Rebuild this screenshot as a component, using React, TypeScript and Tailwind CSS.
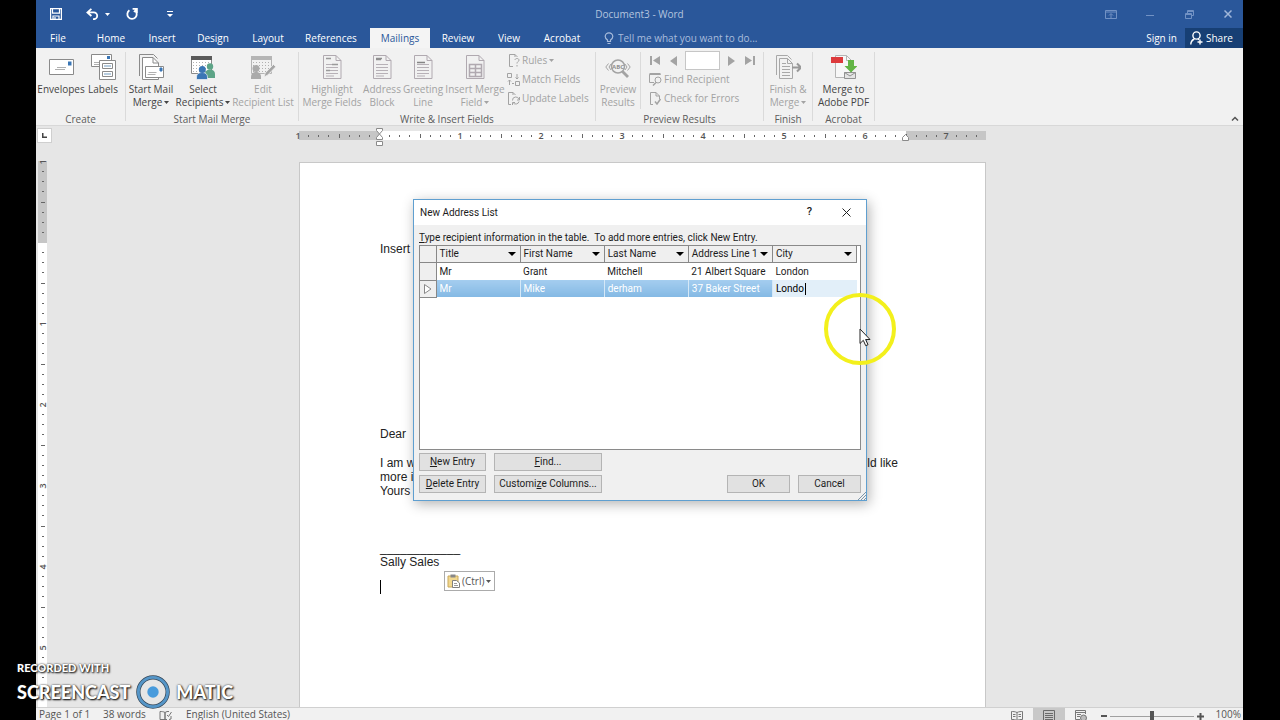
import { type ReactNode, useState } from "react";

const FONT_UI = '"Open Sans", "Noto Sans", sans-serif';
const FONT_DIALOG = 'Roboto, "Open Sans", sans-serif';
const FONT_DOCUMENT = '"Liberation Sans", Arial, sans-serif';

const TABS = [
  { label: "File", width: "w-[44px]" },
  { label: "Home", width: "w-[62px]" },
  { label: "Insert", width: "w-[40px]" },
  { label: "Design", width: "w-[62px]" },
  { label: "Layout", width: "w-[48px]" },
  { label: "References", width: "w-[78px]" },
  { label: "Mailings", width: "w-[60px]" },
  { label: "Review", width: "w-[56px]" },
  { label: "View", width: "w-[46px]" },
  { label: "Acrobat", width: "w-[60px]" },
];

const COLUMNS = ["Title", "First Name", "Last Name", "Address Line 1", "City"];

const INCH = 81;

function Caret({ className = "" }: Readonly<{ className?: string }>) {
  return (
    <svg viewBox="0 0 5 3" className={`inline-block h-[3px] w-[5px] ${className}`} fill="currentColor">
      <path d="M0 0h5L2.5 3z" />
    </svg>
  );
}

function SaveIcon() {
  return (
    <svg viewBox="0 0 12 12" className="size-3" fill="none" stroke="#fff">
      <path d="M.6.6h10.8v10.8H.6zM2.5.6v4.6h7V.6M3 11.4V8h6v3.4M5 9v2" strokeWidth="1.2" />
    </svg>
  );
}

function UndoIcon() {
  return (
    <svg viewBox="0 0 13 12" className="h-3 w-[13px]" fill="none" stroke="#fff" strokeWidth="1.8">
      <path d="M5.4.8 1.4 4.4l4 3.6M1.8 4.4h6a3.4 3.4 0 0 1 0 6.8H7" />
    </svg>
  );
}

function RedoIcon() {
  return (
    <svg viewBox="0 0 12 12" className="size-3" fill="none" stroke="#fff" strokeWidth="1.8">
      <path d="M3.4 2.3A4.7 4.7 0 1 0 8.8 2.4M6.6.9h4.3v4.2M10.6 1.2 8 4" />
    </svg>
  );
}

function EnvelopeIcon() {
  return (
    <svg viewBox="0 0 26 26" className="size-[26px]" fill="none">
      <path d="M1.5 5.5h24v15h-24z" fill="#fff" stroke="#8a8a8a" />
      <path d="M20 7.5h3.5v4H20z" fill="#3a76b5" />
      <path d="M9 13.5h9M7 15.5h10" stroke="#b0b0b0" />
    </svg>
  );
}

function LabelsIcon() {
  return (
    <svg viewBox="0 0 26 26" className="size-[26px]" fill="none">
      <path d="M1.5.5h20v12h-20z" fill="#fff" stroke="#8a8a8a" />
      <path d="M17 2h3v3h-3z" fill="#3a76b5" />
      <path d="M4 8.5h5M4 10.5h5" stroke="#b0b0b0" />
      <path d="M9.5 6.5h16v19h-16z" fill="#fff" stroke="#8a8a8a" />
      <path d="M12.5 9.5h10v5h-10zM12.5 17.5h10v5h-10z" stroke="#8a8a8a" />
      <path d="M14 12h7M14 20h7" stroke="#6f9ac0" />
    </svg>
  );
}

function StartMergeIcon() {
  return (
    <svg viewBox="0 0 26 26" className="size-[26px]" fill="none" stroke="#8a8a8a">
      <path d="M1.5 22V.5h14l4 4" />
      <path d="M4.5 25.5v-22h10.5l5.5 5.5v16.5z" fill="#fff" />
      <path d="M15 3.5v5.5h5.5" />
      <path d="M7.5 12.5h18v11h-18z" fill="#fff" />
      <path d="M22 14h2v3h-2z" fill="#3a76b5" stroke="#3a76b5" />
      <path d="M10.5 18.5h8M9.5 20.5h8" stroke="#b0b0b0" />
    </svg>
  );
}

function RecipientsIcon({ muted = false }: Readonly<{ muted?: boolean }>) {
  const head = muted ? "#b5b5b5" : "#5a5a5a";
  const one = muted ? "#aaa" : "#3a76b5";
  const two = muted ? "#aaa" : "#5da487";
  return (
    <svg viewBox="0 0 26 26" className="size-[26px]" fill="none">
      <path d="M1.5 2.5h20v17h-20z" fill={muted ? "#f1f1f1" : "#fff"} stroke={muted ? "#b5b5b5" : "#8a8a8a"} />
      <path d="M1 2h21v4H1z" fill={head} />
      <path d="M3 8.5h17M3 11.5h17M3 14.5h17M3 17.5h17" stroke="#b0b0b0" strokeDasharray="1 2" />
      {muted ? (
        <>
          <path d="M1 25v-2.5c0-2.5 2-4.5 5-4.5s5 2 5 4.5V25z" fill={one} />
          <circle cx="6" cy="14.5" r="3.5" fill={one} />
          <path d="m14 23 1.2-4L23.5 10.5l2.3 2.3-8.3 8.4z" fill="#a5a5a5" stroke="#f1f1f1" strokeWidth=".8" />
        </>
      ) : (
        <>
          <path d="M15 24v-4c0-3 2-4.5 5-4.5s5 1.5 5 4.5v4z" fill={two} />
          <circle cx="20" cy="12.5" r="3.2" fill={two} />
          <path d="M6.5 25.5V23c0-2.8 2-4.5 5.5-4.5s5.5 1.7 5.5 4.5v2.5z" fill={one} stroke="#fff" strokeWidth=".6" />
          <circle cx="12.3" cy="15.5" r="3.5" fill={one} />
        </>
      )}
    </svg>
  );
}

function DocumentIcon({ kind }: Readonly<{ kind: "highlight" | "address" | "greeting" | "merge" }>) {
  return (
    <svg viewBox="0 0 26 26" className="size-[26px]" fill="none" stroke="#b0a9b0">
      <path d="M4.5 1.5H17l5 5v18H4.5z" />
      <path d="M17 1.5v5h5" />
      {kind === "merge" ? (
        <path d="M7.5 10.5h12v12h-12zM7.5 14.5h12M7.5 18.5h12M13.5 10.5v12" strokeWidth="1.5" />
      ) : (
        <path d="M7 10.5h12M7 13.5h12M7 16.5h12M7 19.5h12M7 22h8" strokeWidth=".9" />
      )}
      {kind === "highlight" && <path d="M7 4.5h5M13 10.5h6M7 16.5h4" stroke="#9a9a9a" strokeWidth="1.5" />}
      {kind === "address" && <path d="M7 4.5h6M7 5.5h5" stroke="#8f8f8f" strokeWidth="1.5" />}
      {kind === "greeting" && <path d="M7 8.5h8" stroke="#858585" strokeWidth="1.5" />}
    </svg>
  );
}

function PreviewIcon() {
  return (
    <svg viewBox="0 0 26 26" className="size-[26px]" fill="none" stroke="#a3a3a3">
      <path d="M3.5 9.5.8 13l2.7 3.5M6 10l-2 3 2 3M22.5 9.5l2.7 3.5-2.7 3.5M20 10l2 3-2 3" />
      <circle cx="13" cy="12.5" r="6.5" strokeWidth="1.5" />
      <path d="m17.5 17.5 5.5 5.5" strokeWidth="2.8" />
      <text x="13" y="15" fontSize="6" fontWeight="700" fill="#8f8f8f" stroke="none" textAnchor="middle">
        ABC
      </text>
    </svg>
  );
}

function FinishIcon() {
  return (
    <svg viewBox="0 0 26 26" className="size-[26px]" fill="none" stroke="#a8a8a8">
      <path d="M1.5 21V1.5h11l4 4" />
      <path d="M4.5 24.5v-20h8l5 5v15z" fill="#f1f1f1" />
      <path d="M12.5 4.5v5h5M7 9.5h4M7 12.5h8M7 15.5h8M7 18.5h8M7 21.5h8" />
      <path d="M17 13.5h8M22 9.5l4 4-4 4" stroke="#999" strokeWidth="2" />
    </svg>
  );
}

function AdobeIcon() {
  return (
    <svg viewBox="0 0 26 26" className="size-[26px]" fill="none">
      <path d="M4.5 1.5h11l5 5v17h-16z" fill="#f7f7f7" stroke="#b5b5b5" />
      <path d="M15.5 1.5v5h5" stroke="#b5b5b5" />
      <path d="M0 3h12v6H0z" fill="#dd3a3c" />
      <path d="M13.5 18.5h11v6h-11z" fill="#e4e4e4" stroke="#929292" />
      <path d="m13.5 18.5 5.5 3.5 5.5-3.5" stroke="#929292" />
      <path d="M17 6h6v6h3.5L20 18.5 13.5 12H17z" fill="#62b545" />
    </svg>
  );
}

function SmallDocIcon({ children }: Readonly<{ children: ReactNode }>) {
  return (
    <svg viewBox="0 0 13 13" className="size-[13px] shrink-0" fill="none" stroke="currentColor">
      {children}
    </svg>
  );
}

function RibbonButton({
  icon,
  lines,
  width,
  disabled = false,
  menu = false,
}: Readonly<{ icon: ReactNode; lines: string[]; width: string; disabled?: boolean; menu?: boolean }>) {
  return (
    <button
      disabled={disabled}
      className={`flex shrink-0 flex-col items-center whitespace-nowrap pt-1.5 ${width} ${disabled ? "text-[#a3a3a3]" : "text-[#444]"}`}
    >
      <span className="flex h-[29px] items-start">{icon}</span>
      {lines.map((line, i) => (
        <span key={line} className="flex items-center gap-0.5 leading-[13px]">
          {line}
          {menu && i === lines.length - 1 && <Caret />}
        </span>
      ))}
    </button>
  );
}

function SmallButton({ icon, label, menu = false }: Readonly<{ icon: ReactNode; label: string; menu?: boolean }>) {
  return (
    <button disabled className="flex h-[19px] items-center gap-0.5 whitespace-nowrap text-[#a3a3a3]">
      {icon}
      <span>{label}</span>
      {menu && <Caret />}
    </button>
  );
}

function RibbonGroup({ label, width, children }: Readonly<{ label: string; width: string; children: ReactNode }>) {
  return (
    <section className={`flex shrink-0 flex-col ${width}`}>
      <div className="flex min-h-0 flex-1">{children}</div>
      <h2 className="h-3 text-center leading-3 text-[#5c5c5c]">{label}</h2>
    </section>
  );
}

function Divider() {
  return <div className="my-1 w-px shrink-0 bg-[#dadada]" />;
}

function TitleBar() {
  return (
    <header className="grid h-7 shrink-0 grid-cols-[1fr_auto_1fr] items-center bg-[#2a579a]">
      <div className="flex items-center pl-3.5 text-white">
        <button aria-label="Save">
          <SaveIcon />
        </button>
        <button aria-label="Undo" className="ml-6 flex items-center gap-1.5">
          <UndoIcon />
          <Caret />
        </button>
        <button aria-label="Repeat" className="ml-4">
          <RedoIcon />
        </button>
        <button aria-label="Customize Quick Access Toolbar" className="ml-[29px]">
          <svg viewBox="0 0 6 6" className="size-1.5" fill="#fff">
            <path d="M0 0h6v1H0zM0 3h6L3 6z" />
          </svg>
        </button>
      </div>
      <h1 className="text-[#b4c5df]">Document3 - Word</h1>
      <div className="flex items-center justify-end gap-[9px] text-[#7292c4]">
        <button aria-label="Ribbon Display Options" className="flex w-[30px] justify-center">
          <svg viewBox="0 0 12 9" className="h-[9px] w-3" fill="none" stroke="currentColor">
            <path d="M.5.5h11v8H.5zM.5 2h11M6 8V4M4 5.5 6 3.5l2 2" />
          </svg>
        </button>
        <button aria-label="Minimize" className="flex w-[30px] justify-center">
          <span className="mt-0.5 h-px w-2 bg-current" />
        </button>
        <button aria-label="Restore" className="flex w-[30px] justify-center">
          <svg viewBox="0 0 9 9" className="size-[9px]" fill="none" stroke="currentColor">
            <path d="M.5 3.5h6v5h-6zM.5 4.5h6M2.5 3V.5h6v5H7M2.5 1.5h6" />
          </svg>
        </button>
        <button aria-label="Close" className="flex w-[30px] justify-center text-[#a0b6d9]">
          <svg viewBox="0 0 8 8" className="size-2" fill="none" stroke="currentColor" strokeWidth="1.5">
            <path d="m.5.5 7 7M7.5.5l-7 7" />
          </svg>
        </button>
      </div>
    </header>
  );
}

function TabBar({ active, onSelect }: Readonly<{ active: string; onSelect: (tab: string) => void }>) {
  return (
    <nav className="flex h-5 shrink-0 items-stretch bg-[#2a579a] text-white">
      {TABS.map((tab) => (
        <button
          key={tab.label}
          onClick={() => onSelect(tab.label)}
          className={`shrink-0 text-center ${tab.width} ${tab.label === active ? "bg-[#f4f4f4] text-[#2a579a]" : ""}`}
        >
          {tab.label}
        </button>
      ))}
      <label className="ml-3 flex items-center gap-1 text-[#a9bddc]">
        <svg viewBox="0 0 10 13" className="h-[13px] w-2.5" fill="none" stroke="currentColor" strokeWidth="1.2">
          <path d="M3.5 9.5V8C2 7 1.2 6 1.2 4.6a3.8 3.8 0 0 1 7.6 0C8.8 6 8 7 6.5 8v1.5zM3.5 11.5h3" />
        </svg>
        <input
          aria-label="Tell me"
          placeholder="Tell me what you want to do..."
          className="w-40 bg-transparent outline-none placeholder:text-[#a9bddc]"
        />
      </label>
      <div className="ml-auto flex">
        <button className="mr-2">Sign in</button>
        <button className="flex w-[58px] items-center gap-[3px] bg-[#173f74] pl-[5px]">
          <svg viewBox="0 0 13 14" className="h-3.5 w-[13px]" fill="none" stroke="#fff" strokeWidth="1.4">
            <circle cx="6.5" cy="4.5" r="3.6" />
            <path d="M.8 13.5c0-2.500 1.500-4.500 3.500-5.500M8 8l1 .8M10 8.500v5M7.500 11h5" />
          </svg>
          Share
        </button>
      </div>
    </nav>
  );
}

function Ribbon() {
  return (
    <div className="flex h-[78px] shrink-0 border-b border-[#d8d8d8] bg-[#f1f1f1]">
      <RibbonGroup label="Create" width="w-[89px]">
        <RibbonButton icon={<EnvelopeIcon />} lines={["Envelopes"]} width="w-[50px]" />
        <RibbonButton icon={<LabelsIcon />} lines={["Labels"]} width="w-[34px]" />
      </RibbonGroup>
      <Divider />
      <RibbonGroup label="Start Mail Merge" width="w-[172px]">
        <RibbonButton icon={<StartMergeIcon />} lines={["Start Mail", "Merge"]} width="w-[50px]" menu />
        <RibbonButton icon={<RecipientsIcon />} lines={["Select", "Recipients"]} width="w-[54px]" menu />
        <RibbonButton icon={<RecipientsIcon muted />} lines={["Edit", "Recipient List"]} width="w-[66px]" disabled />
      </RibbonGroup>
      <Divider />
      <RibbonGroup label="Write & Insert Fields" width="w-[296px]">
        <RibbonButton icon={<DocumentIcon kind="highlight" />} lines={["Highlight", "Merge Fields"]} width="w-[66px]" disabled />
        <RibbonButton icon={<DocumentIcon kind="address" />} lines={["Address", "Block"]} width="w-[34px]" disabled />
        <RibbonButton icon={<DocumentIcon kind="greeting" />} lines={["Greeting", "Line"]} width="w-[48px]" disabled />
        <RibbonButton icon={<DocumentIcon kind="merge" />} lines={["Insert Merge", "Field"]} width="w-[56px]" disabled menu />
        <div className="flex flex-col pl-1 pt-[3px]">
          <SmallButton
            label="Rules"
            menu
            icon={
              <SmallDocIcon>
                <path d="M6 12.5H2.500v-12H8l2.500 2.500M8 .500V3M8 6c0-1 1-1.500 2-1.500S12 5 12 6.200 10 7.500 10 9.500M10 11v1.500" />
              </SmallDocIcon>
            }
          />
          <SmallButton
            label="Match Fields"
            icon={
              <SmallDocIcon>
                <path d="M.5.5h4v4h-4zM8.5 8.5h4v4h-4zM10 1v5M8.5 4.5 10 6l1.5-1.5M2.5 12V7M1 8.5 2.5 7 4 8.5M5 10.5h2" />
              </SmallDocIcon>
            }
          />
          <SmallButton
            label="Update Labels"
            icon={
              <SmallDocIcon>
                <path d="M4 12.5H1.500v-12H6L8.500 3M6 .500V3M5.500 8.500A3.300 3.300 0 0 1 12 7.500M12.500 5v3H10M12 9.500a3.300 3.300 0 0 1-6 1M5.500 13v-2.500H8" />
              </SmallDocIcon>
            }
          />
        </div>
      </RibbonGroup>
      <Divider />
      <RibbonGroup label="Preview Results" width="w-[167px]">
        <RibbonButton icon={<PreviewIcon />} lines={["Preview", "Results"]} width="w-[44px]" disabled />
        <Divider />
        <div className="flex flex-col pl-2 pt-[3px] text-[#a3a3a3]">
          <div className="flex h-[19px] items-center pl-px">
            <button disabled aria-label="First record">
              <svg viewBox="0 0 10 9" className="h-[9px] w-2.5" fill="currentColor">
                <path d="M0 0h2v9H0zM10 0v9L3 4.5z" />
              </svg>
            </button>
            <button disabled aria-label="Previous record" className="ml-2.5">
              <svg viewBox="0 0 7 10" className="h-2.5 w-[7px]" fill="currentColor">
                <path d="M7 0v10L0 5z" />
              </svg>
            </button>
            <input aria-label="Record" disabled className="ml-2 h-[19px] w-[35px] border border-[#c6c6c6] bg-white" />
            <button disabled aria-label="Next record" className="ml-2">
              <svg viewBox="0 0 7 10" className="h-2.5 w-[7px]" fill="currentColor">
                <path d="M0 0v10l7-5z" />
              </svg>
            </button>
            <button disabled aria-label="Last record" className="ml-2.5">
              <svg viewBox="0 0 10 9" className="h-[9px] w-2.5" fill="currentColor">
                <path d="M8 0h2v9H8zM0 0v9l7-4.5z" />
              </svg>
            </button>
          </div>
          <SmallButton
            label="Find Recipient"
            icon={
              <SmallDocIcon>
                <path d="M5 9.5H.5v-8h11" />
                <path d="M.5 1h11" strokeWidth="2" />
                <circle cx="9" cy="7" r="3" />
                <path d="m7 9.5-3 3" strokeWidth="1.5" />
              </SmallDocIcon>
            }
          />
          <SmallButton
            label="Check for Errors"
            icon={
              <SmallDocIcon>
                <path d="M4 12.5H1.5v-12H7L10.5 4v3M7 .5V4h3.5" />
                <path d="m6 9.5 2 2.5 3.5-5" strokeWidth="1.5" />
              </SmallDocIcon>
            }
          />
        </div>
      </RibbonGroup>
      <Divider />
      <RibbonGroup label="Finish" width="w-[48px]">
        <RibbonButton icon={<FinishIcon />} lines={["Finish &", "Merge"]} width="w-[48px]" disabled menu />
      </RibbonGroup>
      <Divider />
      <RibbonGroup label="Acrobat" width="w-[61px]">
        <RibbonButton icon={<AdobeIcon />} lines={["Merge to", "Adobe PDF"]} width="w-[61px]" />
      </RibbonGroup>
      <Divider />
      <button aria-label="Collapse the Ribbon" className="ml-auto flex items-end px-1 pb-1">
        <svg viewBox="0 0 8 5" className="h-[5px] w-2" fill="none" stroke="#555" strokeWidth="1.5">
          <path d="M1 4.5 4 1.5l3 3" />
        </svg>
      </button>
    </div>
  );
}

// Tick marks fall every eighth of an inch, numbers on the inch.
function rulerMarks(eighths: number) {
  const marks: { at: number; half: boolean; label: string }[] = [];
  for (let i = 0; i <= eighths; i++) {
    marks.push({
      at: Math.round((i * INCH) / 8),
      half: i % 8 === 4,
      label: i % 8 === 0 ? String(Math.abs(i / 8 - 1)) : "",
    });
  }
  return marks.filter((mark) => mark.label !== "0");
}

function HorizontalRuler() {
  return (
    <svg viewBox="0 0 687 20" className="h-5 w-[687px] shrink-0 overflow-visible">
      <path d="M0 3h687v9H0z" fill="#c6c6c6" />
      <path d="M80 3h527v9H80z" fill="#fff" />
      {rulerMarks(67).map((mark) =>
        mark.label ? (
          <text key={mark.at} x={mark.at - 1} y="11" fontSize="9" fontWeight="600" fill="#555" textAnchor="middle">
            {mark.label}
          </text>
        ) : (
          <path key={mark.at} d={mark.half ? `M${mark.at - 1} 6h1v4h-1z` : `M${mark.at - 1} 7h1v2h-1z`} fill="#666" />
        ),
      )}
      <g fill="#fff" stroke="#8a8a8a">
        <path d="M77.5.5h6v2l-3 3.5-3-3.5zM80.5 6l3 3.5v2h-6v-2zM77.5 13.5h6v4h-6z" />
        <path d="m606.5 6.5 3 3v3h-6v-3z" />
      </g>
    </svg>
  );
}

function VerticalRuler() {
  return (
    <svg viewBox="0 0 9 545" className="mb-auto h-[545px] w-[9px] overflow-visible">
      <path d="M0 0h9v82H0z" fill="#c6c6c6" />
      <path d="M0 82h9v640H0z" fill="#fff" />
      {rulerMarks(53).map((mark) =>
        mark.label ? (
          <text
            key={mark.at}
            fontSize="9"
            fontWeight="600"
            fill="#555"
            textAnchor="middle"
            transform={`translate(8 ${mark.at + 1}) rotate(-90)`}
          >
            {mark.label}
          </text>
        ) : (
          <path key={mark.at} d={mark.half ? `M3 ${mark.at}h4v1H3z` : `M4 ${mark.at}h2v1H4z`} fill="#666" />
        ),
      )}
    </svg>
  );
}

function DocumentPage() {
  return (
    <article
      className="w-[687px] shrink-0 border border-b-0 border-[#c8c8c8] bg-white px-20 pt-[79px] text-[12px] leading-[14px] text-[#222]"
      style={{ fontFamily: FONT_DOCUMENT }}
    >
      <p>Insert</p>
      <p className="mt-[171px]">Dear</p>
      <p className="mt-[15px] flex justify-between pr-[7px]">
        <span>I am w</span>
        <span>ld like</span>
      </p>
      <p>more i</p>
      <p>Yours</p>
      <p className="mt-[43px]">____________</p>
      <p>Sally Sales</p>
      <div className="flex">
        <span className="mt-[11px] h-3.5 w-px bg-black" />
        <button
          className="ml-[63px] mt-0.5 flex h-5 w-[51px] items-center gap-0.5 border border-[#ababab] bg-white pl-0.5 text-[10px] text-[#555]"
          style={{ fontFamily: FONT_UI }}
        >
          <svg viewBox="0 0 13 14" className="h-3.5 w-[13px]" fill="none">
            <path d="M1 2h10v11H1z" fill="#f2d88f" stroke="#c9a95c" />
            <path d="M3.5.5h5v3h-5z" fill="#888" />
            <path d="M5.5 6.5h4l3 2.5v4.5h-7z" fill="#fff" stroke="#808080" />
            <path d="M7 9.5h3M7 11.5h4" stroke="#999" />
          </svg>
          (Ctrl)
          <Caret />
        </button>
      </div>
    </article>
  );
}

function Workspace() {
  return (
    <main className="flex min-h-0 flex-1 flex-col overflow-hidden bg-[#e6e6e6]">
      <div className="flex h-9 shrink-0 pl-px pt-0.5">
        <button
          aria-label="Tab selector"
          className="flex size-[15px] shrink-0 items-center justify-center border border-[#cfcfcf] bg-white"
        >
          <svg viewBox="0 0 5 5" className="size-[5px]" fill="#444">
            <path d="M0 0h1.5v3.5H5V5H0z" />
          </svg>
        </button>
        <div className="flex flex-1 justify-center pr-2.5">
          <HorizontalRuler />
        </div>
      </div>
      <div className="flex min-h-0 flex-1">
        <div className="-mt-px flex pl-0.5">
          <VerticalRuler />
        </div>
        <div className="flex flex-1 justify-center pr-[5px]">
          <DocumentPage />
        </div>
      </div>
    </main>
  );
}

function StatusBar() {
  const [zoom, setZoom] = useState(50);

  return (
    <footer className="flex h-[13px] shrink-0 items-start overflow-hidden border-t border-[#d0d0d0] bg-[#f1f1f1] leading-3 text-[#555]">
      <span className="ml-[3px] w-16 shrink-0">Page 1 of 1</span>
      <span className="w-14 shrink-0">38 words</span>
      <svg viewBox="0 0 13 12" className="mt-0.5 h-3 w-[13px]" fill="none" stroke="#777">
        <path d="M6 2.5C4.5 1.5 2.5 1.5 1 1.5v8h5zM6 2.5v7h2M6 2.5l2-1h2M10 9.5l2-.5V6M8 5l1.5 1.5L12.5 2" />
      </svg>
      <span className="ml-3.5 whitespace-nowrap">English (United States)</span>
      <div className="ml-auto flex shrink-0 items-start pr-0.5">
        <div className="flex h-4 items-center">
          <button aria-label="Read Mode" className="mr-2.5">
            <svg viewBox="0 0 12 10" className="h-2.5 w-3" fill="none" stroke="#777">
              <path d="M6 1.5C4 .5 2 .5.5.5v8c2 0 4 0 5.5 1 1.5-1 3.5-1 5.5-1v-8C10 .5 8 .5 6 1.5zM6 1.5v8M2 3.5h2.5M2 5.5h2.5M7.5 3.5H10M7.5 5.5H10" />
            </svg>
          </button>
          <button aria-label="Print Layout" className="flex h-4 w-8 items-center justify-center bg-[#c8c8c8]">
            <svg viewBox="0 0 12 12" className="size-3" fill="none" stroke="#6a6a6a">
              <path d="M.5.5h11v11H.5zM2 3.5h8M2 5.5h8M2 7.5h8M2 9.5h8" />
            </svg>
          </button>
          <button aria-label="Web Layout" className="ml-2.5">
            <svg viewBox="0 0 12 12" className="size-3" fill="none" stroke="#777">
              <path d="M5 9.5H.5v-9h10V4M.5 2.5h10M2 4.5h4M2 6.5h3" />
              <circle cx="8.5" cy="8" r="3" fill="#bbb" />
            </svg>
          </button>
          <button aria-label="Zoom Out" className="ml-3.5 flex">
            <span className="h-0.5 w-1.5 bg-[#555]" />
          </button>
          <input
            type="range"
            aria-label="Zoom"
            value={zoom}
            onChange={(e) => setZoom(Number(e.target.value))}
            className="mx-[3px] h-3 w-[84px] appearance-none bg-[linear-gradient(#a0a0a0,#a0a0a0)] bg-[length:100%_1px] bg-center bg-no-repeat [&::-webkit-slider-thumb]:h-2.5 [&::-webkit-slider-thumb]:w-1 [&::-webkit-slider-thumb]:appearance-none [&::-webkit-slider-thumb]:bg-[#555]"
          />
          <button aria-label="Zoom In">
            <svg viewBox="0 0 7 7" className="size-[7px]" fill="#555">
              <path d="M2.5 0h2v2.5H7v2H4.5V7h-2V4.5H0v-2h2.5z" />
            </svg>
          </button>
        </div>
        <span className="ml-3">100%</span>
      </div>
    </footer>
  );
}

function DialogButton({
  before = "",
  accel = "",
  after = "",
  width,
}: Readonly<{ before?: string; accel?: string; after?: string; width: string }>) {
  return (
    <button className={`h-[18px] border border-[#b4b4b4] bg-[#e1e1e1] text-center leading-4 ${width}`}>
      {before}
      {accel && <span className="underline">{accel}</span>}
      {after}
    </button>
  );
}

function AddressTable() {
  const [city, setCity] = useState("Londo");

  return (
    <table className="w-[437px] table-fixed border-collapse text-left">
      <colgroup>
        <col className="w-4" />
        {COLUMNS.map((column) => (
          <col key={column} />
        ))}
      </colgroup>
      <thead>
        <tr className="bg-[#efefef]">
          <th className="border-b border-r border-[#888] p-0" />
          {COLUMNS.map((column) => (
            <th key={column} className="border-b border-r border-[#888] p-0 font-normal">
              <button className="flex h-4 w-full items-center justify-between whitespace-nowrap pl-[3px] pr-1 leading-4">
                {column}
                <svg viewBox="0 0 8 4" className="h-1 w-2 shrink-0">
                  <path d="M0 0h8L4 4z" />
                </svg>
              </button>
            </th>
          ))}
        </tr>
      </thead>
      <tbody className="whitespace-nowrap leading-[17px]">
        <tr>
          <th className="border-b border-r border-[#888] bg-[#efefef] p-0" />
          {["Mr", "Grant", "Mitchell", "21 Albert Square", "London"].map((value) => (
            <td key={value} className="p-0 pl-[3px]">
              {value}
            </td>
          ))}
        </tr>
        <tr className="text-white">
          <th className="border-b border-r border-[#888] bg-[#efefef] p-0">
            <svg viewBox="0 0 8 10" className="ml-1 h-2.5 w-2" fill="#fff" stroke="#888">
              <path d="M.5.5 7 5 .5 9.5z" />
            </svg>
          </th>
          {["Mr", "Mike", "derham", "37 Baker Street"].map((value) => (
            <td key={value} className="border-r border-[#d5e8f7] bg-linear-to-b from-[#a4cdef] to-[#84b9e4] p-0 pl-[3px]">
              {value}
            </td>
          ))}
          <td className="bg-[#e2eff9] p-0 pl-[3px] text-black">
            <div className="flex items-center">
              <input
                aria-label="City"
                value={city}
                onChange={(e) => setCity(e.target.value)}
                className="h-[17px] w-[29px] bg-transparent outline-none"
              />
              <span className="h-3 w-px bg-black" />
            </div>
          </td>
        </tr>
      </tbody>
    </table>
  );
}

function AddressListDialog() {
  return (
    <div className="pointer-events-none absolute inset-0 flex items-start justify-center pt-[199px]">
      <section
        role="dialog"
        aria-labelledby="address-list-title"
        className="pointer-events-auto relative w-[454px] border border-[#5f9fd0] bg-[#f0f0f0] text-[#1c1c1c] shadow-[2px_3px_12px_rgba(0,0,0,0.3)]"
        style={{ fontFamily: FONT_DIALOG }}
      >
        <div className="flex h-[25px] items-center bg-white pl-1.5 pr-[15px]">
          <h2 id="address-list-title">New Address List</h2>
          <button aria-label="Help" className="ml-auto text-[11px] font-medium">
            ?
          </button>
          <button aria-label="Close dialog" className="ml-[30px]">
            <svg viewBox="0 0 9 9" className="size-[9px]" fill="none" stroke="#222">
              <path d="m.5.5 8 8M8.5.5l-8 8" />
            </svg>
          </button>
        </div>
        <div className="px-[5px] pb-[7px] pt-1.5">
          <p className="whitespace-pre leading-[14px]">
            <span className="underline">T</span>ype recipient information in the table.{"  "}To add more entries, click New Entry.
          </p>
          <div className="h-[205px] border border-[#8a8a8a] bg-white">
            <AddressTable />
          </div>
          <div className="mt-[3px] flex gap-2">
            <DialogButton accel="N" after="ew Entry" width="w-[67px]" />
            <DialogButton accel="F" after="ind..." width="w-[108px]" />
          </div>
          <div className="mt-1 flex gap-2">
            <DialogButton accel="D" after="elete Entry" width="w-[67px]" />
            <DialogButton before="Customi" accel="z" after="e Columns..." width="w-[108px]" />
            <DialogButton before="OK" width="ml-auto w-[63px]" />
            <DialogButton before="Cancel" width="w-[63px]" />
          </div>
        </div>
        <svg viewBox="0 0 8 8" className="absolute bottom-0 right-0 size-2" stroke="#7d95a8">
          <path d="m0 8 8-8M3 8l5-5M6 8l2-2" />
        </svg>
        <div className="absolute left-[410px] top-[93px] size-[72px] rounded-full border-4 border-[#f3f01c]" />
        <svg viewBox="0 0 12 19" className="absolute left-[445px] top-[128px] h-[19px] w-3" fill="#fff" stroke="#222">
          <path d="M1 1v14.5l3.3-3.2 2.4 5.4 2.3-1-2.4-5.2H11z" />
        </svg>
      </section>
    </div>
  );
}

function Watermark() {
  return (
    <div
      className="absolute bottom-[11px] left-[17px] font-black text-white [text-shadow:1px_1px_2px_#000,0_0_2px_#333]"
      style={{ fontFamily: "Lato, sans-serif" }}
    >
      <p className="text-[11px] leading-[14px]">RECORDED WITH</p>
      <p className="flex items-center text-[18px] leading-[34px]">
        SCREENCAST
        <svg viewBox="0 0 36 36" className="mx-1.5 size-[34px]" fill="none">
          <circle cx="18" cy="18" r="15.5" stroke="#35485a" strokeWidth="4.5" />
          <circle cx="18" cy="18" r="15.5" stroke="#5596c8" strokeWidth="3" />
          <circle cx="18" cy="18" r="6" fill="#489bdc" />
        </svg>
        MATIC
      </p>
    </div>
  );
}

export default function App() {
  const [activeTab, setActiveTab] = useState("Mailings");

  return (
    <div
      className="relative flex h-screen overflow-hidden bg-black pl-9 pr-[37px] text-[10px]"
      style={{ fontFamily: FONT_UI }}
    >
      <div className="flex min-w-0 flex-1 flex-col">
        <TitleBar />
        <TabBar active={activeTab} onSelect={setActiveTab} />
        <Ribbon />
        <Workspace />
        <StatusBar />
      </div>
      <AddressListDialog />
      <Watermark />
    </div>
  );
}
